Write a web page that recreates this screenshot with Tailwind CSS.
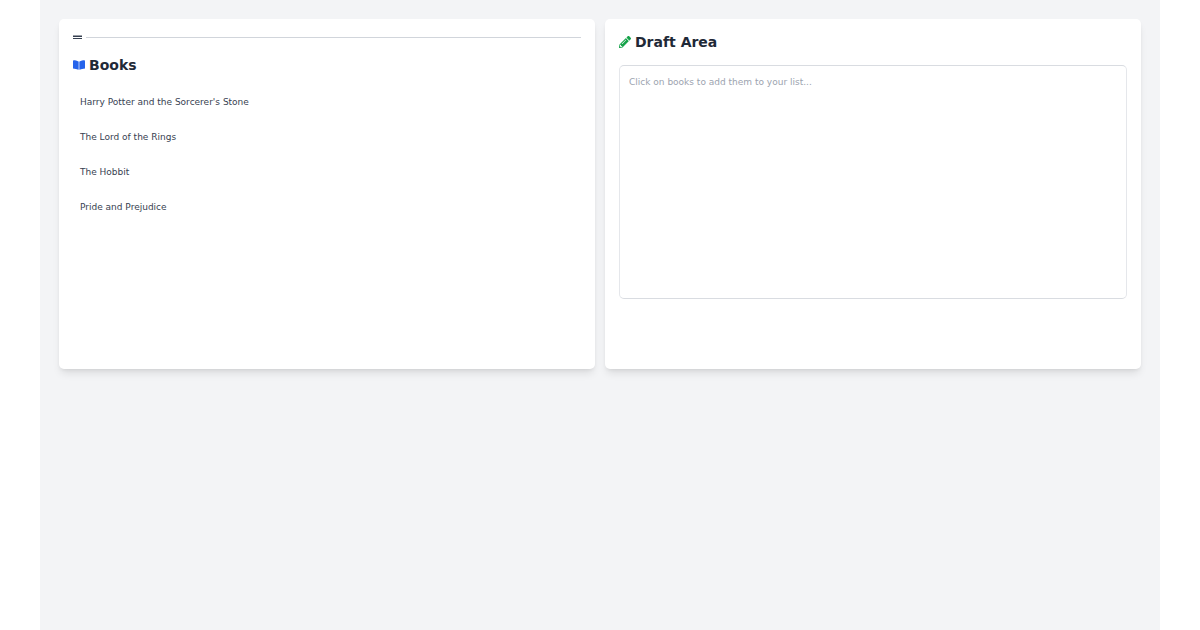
<!DOCTYPE html>
<html lang="en">

<head>
  <meta charset="UTF-8">
  <meta name="viewport" content="width=device-width, initial-scale=1.0">
  <title>Books</title>
  <script src="https://cdn.jsdelivr.net/npm/@tailwindcss/browser@4"></script>
</head>

<body class="bg-white px-10 font-['DejaVu_Sans',sans-serif]">
  <main class="min-h-screen bg-[#f3f4f6] p-[19px]">
    <div class="grid grid-cols-2 gap-[10px]">

      <!-- Books list -->
      <section class="min-h-[350px] rounded-[5px] bg-white p-[14px] shadow-[0_6px_9px_-2px_rgb(0_0_0/0.1),0_2px_4px_-2px_rgb(0_0_0/0.1)]">
        <div class="mb-[14px] flex h-[9px] items-center gap-1">
          <button type="button" aria-label="Menu" class="text-[#374151]">
            <svg class="block h-[9px] w-[9px]" viewBox="0 0 9 9" fill="currentColor">
              <path d="M0 2.6h9V4H0zM0 5h9v1.1H0z" />
            </svg>
          </button>
          <hr class="grow border-[#d1d5db]">
        </div>
        <h2 class="mb-[14px] flex h-[18px] items-center gap-1 text-[14px] leading-[18px] font-bold text-[#1f2937]">
          <svg class="h-3 w-3 text-[#2563eb]" viewBox="0 0 576 512" fill="currentColor" aria-hidden="true">
            <path d="M542.22 32.05c-54.8 3.11-163.72 14.43-230.96 55.59-4.64 2.84-7.27 7.89-7.27 13.17v363.87c0 11.55 12.63 18.85 23.28 13.49 69.18-34.82 169.23-44.32 218.7-46.92 16.89-.89 30.02-14.43 30.02-30.66V62.75c.01-17.71-15.35-31.74-33.77-30.7zM264.73 87.64C197.5 46.48 88.58 35.17 33.78 32.05 15.36 31.01 0 45.04 0 62.75V400.6c0 16.24 13.13 29.78 30.02 30.66 49.49 2.6 149.59 12.11 218.77 46.95 10.62 5.35 23.21-1.94 23.21-13.46V100.63c0-5.29-2.62-10.14-7.27-12.99z" />
          </svg>
          Books
        </h2>
        <ul class="space-y-[7px] text-[9px] leading-[14px] text-[#374151]">
          <li class="cursor-pointer rounded-[5px] p-[7px] hover:bg-gray-100">Harry Potter and the Sorcerer's Stone</li>
          <li class="cursor-pointer rounded-[5px] p-[7px] hover:bg-gray-100">The Lord of the Rings</li>
          <li class="cursor-pointer rounded-[5px] p-[7px] hover:bg-gray-100">The Hobbit</li>
          <li class="cursor-pointer rounded-[5px] p-[7px] hover:bg-gray-100">Pride and Prejudice</li>
        </ul>
      </section>

      <!-- Draft area -->
      <section class="min-h-[350px] rounded-[5px] bg-white p-[14px] shadow-[0_6px_9px_-2px_rgb(0_0_0/0.1),0_2px_4px_-2px_rgb(0_0_0/0.1)]">
        <h2 class="mb-[14px] flex h-[18px] items-center gap-1 text-[14px] leading-[18px] font-bold text-[#1f2937]">
          <svg class="h-3 w-3 text-[#16a34a]" viewBox="0 0 512 512" fill="currentColor" aria-hidden="true">
            <path d="M497.9 142.1l-46.1 46.1c-4.7 4.7-12.3 4.7-17 0l-111-111c-4.7-4.7-4.7-12.3 0-17l46.1-46.1c18.7-18.7 49.1-18.7 67.9 0l60.1 60.1c18.8 18.7 18.8 49.1 0 67.9zM284.2 99.8L21.6 362.4.4 483.9c-2.9 16.4 11.4 30.6 27.8 27.8l121.5-21.3 262.6-262.6c4.7-4.7 4.7-12.3 0-17l-111-111c-4.8-4.7-12.4-4.7-17.1 0zM124.1 339.9c-5.5-5.5-5.5-14.3 0-19.8l154-154c5.5-5.5 14.3-5.5 19.8 0s5.5 14.3 0 19.8l-154 154c-5.5 5.5-14.3 5.5-19.8 0zM88 424h48v36.3l-64.5 11.3-31.1-31.1L51.7 376H88v48z" />
          </svg>
          <label for="draft">Draft Area</label>
        </h2>
        <textarea id="draft" placeholder="Click on books to add them to your list..."
          class="block h-[234px] w-full resize-none rounded-[5px] border border-x-[#e5e7eb] border-y-[#d9dce1] px-[9px] py-[9px] text-[9px] leading-[14px] text-[#374151] placeholder:text-[#9ca3af]"></textarea>
      </section>

    </div>
  </main>
</body>

</html>
